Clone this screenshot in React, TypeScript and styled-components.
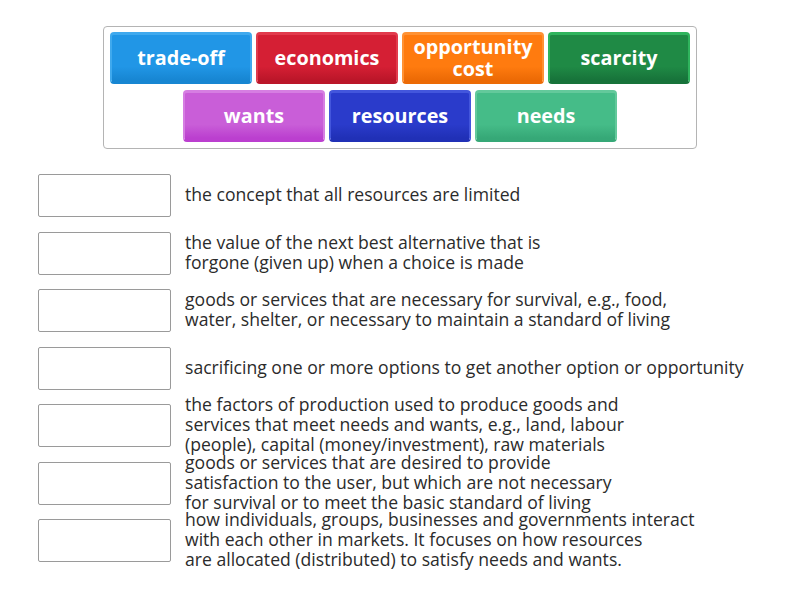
import React from "react";
import styled, { createGlobalStyle } from "styled-components";

const Global = createGlobalStyle`
  html, body { margin: 0; padding: 0; background: #fff; }
  body { font-family: "Open Sans", "DejaVu Sans", sans-serif; }
`;

const Page = styled.div`
  width: 800px;
  min-height: 600px;
  padding-top: 26px;
  box-sizing: border-box;
`;

const Bank = styled.div`
  width: 594px;
  margin: 0 auto;
  box-sizing: border-box;
  border: 1px solid #b4b4b4;
  border-radius: 4px;
  padding: 5px 6px 6px;
  display: flex;
  flex-wrap: wrap;
  justify-content: center;
  column-gap: 4px;
  row-gap: 6px;
`;

const Tile = styled.div<{ $c: string; $light: string; $dark: string }>`
  width: 142px;
  height: 52px;
  box-sizing: border-box;
  border-radius: 4px;
  background: linear-gradient(to bottom, ${(p) => p.$c} 0%, ${(p) => p.$c} 70%, ${(p) => p.$dark} 100%);
  border-top: 3px solid ${(p) => p.$light};
  border-left: 2px solid ${(p) => p.$light};
  border-right: 2px solid ${(p) => p.$light};
  border-bottom: 4px solid ${(p) => p.$dark};
  display: flex;
  align-items: center;
  justify-content: center;
  text-align: center;
  color: #fff;
  font-weight: 700;
  font-size: 19.8px;
  line-height: 22px;
  white-space: pre-line;
`;

const List = styled.div`
  margin-top: 25px;
  padding-left: 38px;
  display: flex;
  flex-direction: column;
  gap: 14.5px;
`;

const Row = styled.div`
  height: 43px;
  display: flex;
  align-items: center;
  gap: 14px;
`;

const Drop = styled.div`
  width: 133px;
  height: 43px;
  flex: none;
  box-sizing: border-box;
  border: 1px solid #9a9a9a;
  border-radius: 2px;
  background: #fff;
`;

const Desc = styled.div`
  font-size: 17.6px;
  line-height: 20px;
  color: #2b2b2b;
  white-space: pre-line;
  margin-top: -3px;
`;

const tiles = [
  { t: "trade-off", c: "#2196e6", l: "#3fa9ee", d: "#1786d2" },
  { t: "economics", c: "#d51f34", l: "#e23a4c", d: "#bb1629" },
  { t: "opportunity\ncost", c: "#ff7b0f", l: "#ff9234", d: "#ec6a05" },
  { t: "scarcity", c: "#1f8a45", l: "#2fb45d", d: "#17733a" },
  { t: "wants", c: "#c95ed8", l: "#d67ee2", d: "#bb3fcf" },
  { t: "resources", c: "#2a3bcb", l: "#4356dc", d: "#2030b6" },
  { t: "needs", c: "#45bc88", l: "#63c99b", d: "#36a877" },
];

const descs = [
  "the concept that all resources are limited",
  "the value of the next best alternative that is\nforgone (given up) when a choice is made",
  "goods or services that are necessary for survival, e.g., food,\nwater, shelter, or necessary to maintain a standard of living",
  "sacrificing one or more options to get another option or opportunity",
  "the factors of production used to produce goods and\nservices that meet needs and wants, e.g., land, labour\n(people), capital (money/investment), raw materials",
  "goods or services that are desired to provide\nsatisfaction to the user, but which are not necessary\nfor survival or to meet the basic standard of living",
  "how individuals, groups, businesses and governments interact\nwith each other in markets. It focuses on how resources\nare allocated (distributed) to satisfy needs and wants.",
];

export default function App() {
  return (
    <Page>
      <Global />
      <Bank>
        {tiles.map((x) => (
          <Tile key={x.t} $c={x.c} $light={x.l} $dark={x.d}>
            {x.t}
          </Tile>
        ))}
      </Bank>
      <List>
        {descs.map((d) => (
          <Row key={d}>
            <Drop />
            <Desc>{d}</Desc>
          </Row>
        ))}
      </List>
    </Page>
  );
}
